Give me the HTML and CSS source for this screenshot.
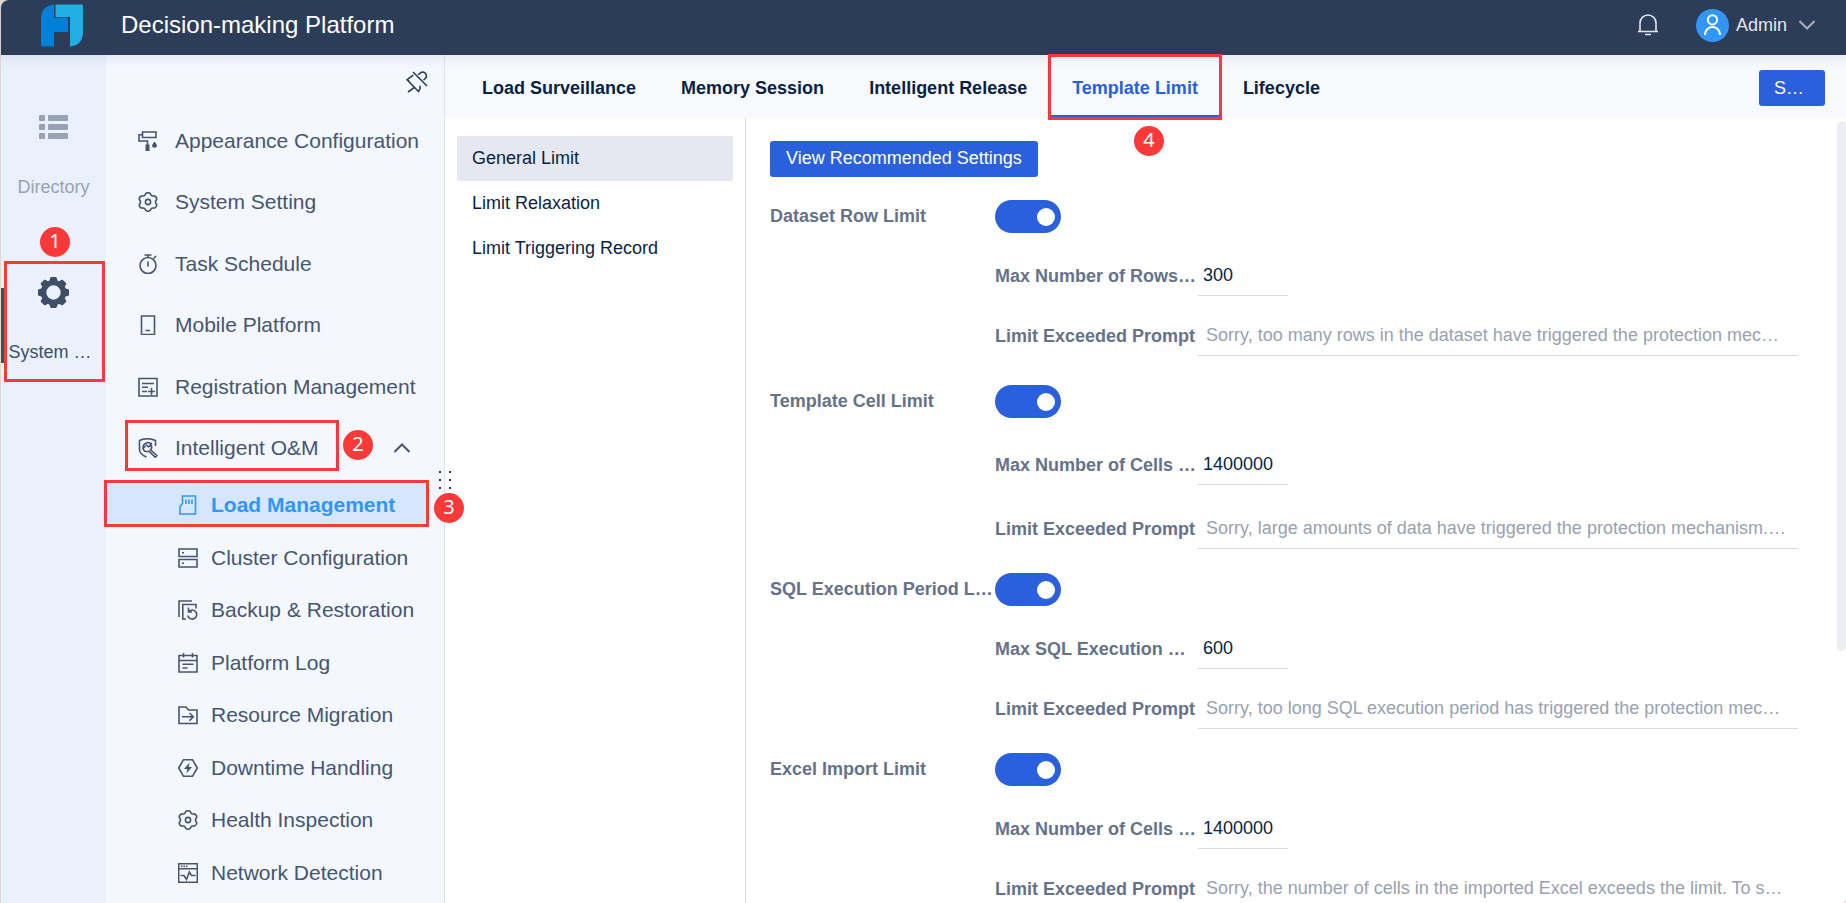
FILE: index.html
```html
<!DOCTYPE html>
<html lang="en">
<head>
<meta charset="utf-8">
<title>Decision-making Platform</title>
<link rel="stylesheet" href="styles.css">
</head>
<body>
<svg class="sprite" aria-hidden="true">
  <symbol id="gear-outline" viewBox="0 0 20 20">
    <path d="M7.800 1.600Q10-.2 12.200 1.600L13.200 3.300Q13.800 4.100 14.800 4L16.400 3.900Q18.900 4.800 18.700 7.400L17.700 9Q17.200 10 17.700 11L18.700 12.600Q18.900 15.200 16.400 16.100L14.800 16Q13.800 15.900 13.200 16.700L12.200 18.400Q10 20.200 7.800 18.400L6.800 16.700Q6.200 15.900 5.200 16L3.600 16.100Q1.100 15.200 1.300 12.600L2.300 11Q2.800 10 2.300 9L1.300 7.400Q1.100 4.800 3.600 3.900L5.200 4Q6.200 4.100 6.800 3.300Z"/>
    <circle cx="10" cy="10" r="2.600"/>
  </symbol>
</svg>
<div class="app">
  <header class="topbar">
    <svg class="logo" viewBox="0 0 42 43" aria-hidden="true">
      <path fill="#0080d8" d="M0 41V13Q1 2 13 .5V14H27V28H13V42.500H1.500Q0 42.500 0 41Z"/>
      <path fill="#22ade5" d="M14.500.5H40.500Q42 .5 42 2V29Q41 41.500 29 42.500V13H14.500Z"/>
    </svg>
    <h1 class="brand">Decision-making Platform</h1>
    <button class="icon-button bell" aria-label="Notifications">
      <svg class="icon" viewBox="0 0 20 22"><path d="M2 17.300V9a8 8 0 0 1 16 0V17.300M0 17.500H20M7 20.500H13"/></svg>
    </button>
    <button class="account">
      <svg class="avatar" viewBox="0 0 33 33"><circle cx="16.500" cy="16.500" r="16.500" fill="#3296f9"/><g fill="none" stroke="#fff" stroke-width="2"><circle cx="16.500" cy="10.800" r="4.600"/><path d="M9 26v-.5a7.500 7.500 0 0 1 15 0V26"/></g></svg>
      <span class="account-name">Admin</span>
      <svg class="chevron" viewBox="0 0 16 10"><path d="M.5 1 8 8.500 15.500 1"/></svg>
    </button>
  </header>

  <div class="body">
    <nav class="rail" aria-label="Primary">
      <a class="rail-item" href="#">
        <span class="rail-icon">
          <svg class="rail-list" viewBox="0 0 29 24"><rect width="6" height="6" rx="1"/><rect x="9" width="20" height="6" rx="1"/><rect y="9" width="6" height="6" rx="1"/><rect x="9" y="9" width="20" height="6" rx="1"/><rect y="18" width="6" height="6" rx="1"/><rect x="9" y="18" width="20" height="6" rx="1"/></svg>
        </span>
        <span class="rail-label">Directory</span>
      </a>
      <a class="rail-item rail-item-active" href="#">
        <span class="rail-icon">
          <svg class="rail-gear" viewBox="0 0 31 31"><circle cx="15.500" cy="15.500" r="9.900" fill="none" stroke="currentColor" stroke-width="5.400"/><g id="teeth"><path id="tooth" d="M11 5 12.300.8Q12.500 0 13.300 0H17.700Q18.500 0 18.700.8L20 5Z"/><use href="#tooth" transform="rotate(45 15.500 15.500)"/><use href="#tooth" transform="rotate(90 15.500 15.500)"/><use href="#tooth" transform="rotate(135 15.500 15.500)"/></g><use href="#teeth" transform="rotate(180 15.500 15.500)"/></svg>
        </span>
        <span class="rail-label">System …</span>
      </a>
    </nav>

    <aside class="side">
      <div class="side-head">
        <button class="icon-button pin" aria-label="Unpin menu">
          <svg class="icon" viewBox="0 0 22 22"><path d="M7 1 21 15M7.300 4.200 1 8.700 8.500 16.500 2 21M3.300 10.600 1 8.400M8.500 16.500 12.500 20.500 14 17.500V14.800M12 3.600 16 1Q20.500 1 20.500 6L17.500 9.200"/></svg>
        </button>
      </div>
      <ul class="menu">
        <li><a class="menu-item" href="#"><svg class="icon" viewBox="0 0 20 20"><path d="M4.500 1H18V6.500H4.500ZM4.500 3.700H1V10H9.500V14"/><path class="solid" d="M7.500 13.500h4V20h-4ZM16.500 10.500q2.700 3 2.500 4.300a2.500 2 0 0 1-5 0q0-1.300 2.500-4.300Z"/></svg>Appearance Configuration</a></li>
        <li><a class="menu-item" href="#"><svg class="icon"><use href="#gear-outline"/></svg>System Setting</a></li>
        <li><a class="menu-item" href="#"><svg class="icon" viewBox="0 0 20 20"><circle cx="10" cy="11.500" r="8"/><path d="M6.500 1H13.500M10 1V3.500M10 7.500V12.500M15.500 4.500 18 2"/></svg>Task Schedule</a></li>
        <li><a class="menu-item" href="#"><svg class="icon" viewBox="0 0 20 20"><path d="M3.500 1H16.500V19.500H3.500ZM7.500 15.500H12"/></svg>Mobile Platform</a></li>
        <li><a class="menu-item" href="#"><svg class="icon" viewBox="0 0 20 20"><path d="M1 1.500H19V19H1ZM4 6.500H16M4 10.300H10M4 14.500H9M10 14.500H17M13.500 11V18"/></svg>Registration Management</a></li>
        <li><a class="menu-item" href="#" aria-expanded="true"><svg class="icon" viewBox="0 0 20 20"><path d="M17.500 8V2.500Q9-1 1.500 2.500V12Q2 16.500 8.500 19M8 6.500 10.200 8.800 12.200 8 12.300 6Q15 9 12.500 11.800L18.800 17.500 17.300 19.300 11 13.200Q6 14.500 5 10.500 4.500 6 9.500 4.500Q12.500 4.500 14 6M7.500 8 5.500 10"/></svg><span class="menu-text">Intelligent O&amp;M</span><svg class="chevron" viewBox="0 0 16 10"><path d="M.5 9 8 1.500 15.500 9"/></svg></a></li>
      </ul>
      <ul class="submenu">
        <li><a class="sub-item sub-item-active" href="#"><svg class="icon" viewBox="0 0 20 20"><path d="M4.500 1H17.500V19H2V11.500L4.500 8.500ZM8 4.500V9M11 4.500V9M14 4.500V9"/></svg>Load Management</a></li>
        <li><a class="sub-item" href="#"><svg class="icon" viewBox="0 0 20 20"><path d="M1 1H19V8.500H1ZM1 11.500H19V19H1ZM4 4.800H6M4 15.200H6"/></svg>Cluster Configuration</a></li>
        <li><a class="sub-item" href="#"><svg class="icon" viewBox="0 0 20 20"><path d="M1 17V1H14M8 19H4.800V4.500H18V8.500M10.500 7.500V12H14M10.500 12A4.500 4.500 0 1 1 9.800 15.500"/></svg>Backup &amp; Restoration</a></li>
        <li><a class="sub-item" href="#"><svg class="icon" viewBox="0 0 20 20"><path d="M1 2.500H19V19H1ZM1 7.500H19M5.500 0V4.500M14.500 0V4.500M4.500 11.300H15.500M4.500 15H9.500"/></svg>Platform Log</a></li>
        <li><a class="sub-item" href="#"><svg class="icon" viewBox="0 0 20 20"><path d="M1 2H8L10.500 5H19V18.500H1ZM4 11.800H15M11.500 8 15.300 11.800 11.500 15.600"/></svg>Resource Migration</a></li>
        <li><a class="sub-item" href="#"><svg class="icon" viewBox="0 0 20 20"><path d="M5.500 1.700H14.500L19.300 10 14.500 18.300H5.500L.7 10Z"/><path class="solid" d="M11.500 4.500 6 11H9.300L8.500 15.500 14 9H10.700Z"/></svg>Downtime Handling</a></li>
        <li><a class="sub-item" href="#"><svg class="icon"><use href="#gear-outline"/></svg>Health Inspection</a></li>
        <li><a class="sub-item" href="#"><svg class="icon" viewBox="0 0 20 20"><path d="M.7.700H19.300V19.300H.7ZM.7 5.800H19.300M3 3.300H4.500M5.500 3.300H7M8 3.300H9.500M2.500 12.500H6L8.500 16.500 11.300 9 13.500 12.500H17.500"/></svg>Network Detection</a></li>
      </ul>
      <svg class="resizer" viewBox="0 0 14 20" aria-hidden="true"><path d="M1 1h2v2h-2ZM11 1h2v2h-2ZM1 9h2v2h-2ZM11 9h2v2h-2ZM1 17h2v2h-2ZM11 17h2v2h-2Z"/></svg>
    </aside>

    <main class="main">
      <div class="tabbar">
        <nav class="tabs" aria-label="Load management">
          <a class="tab" href="#">Load Surveillance</a>
          <a class="tab" href="#">Memory Session</a>
          <a class="tab" href="#">Intelligent Release</a>
          <a class="tab tab-active" href="#">Template Limit</a>
          <a class="tab" href="#">Lifecycle</a>
        </nav>
        <button class="button button-save">S…</button>
      </div>
      <div class="content">
        <nav class="limits" aria-label="Limits">
          <a class="limit limit-active" href="#">General Limit</a>
          <a class="limit" href="#">Limit Relaxation</a>
          <a class="limit" href="#">Limit Triggering Record</a>
        </nav>
        <form class="settings">
          <button class="button" type="button">View Recommended Settings</button>

          <section class="group">
            <div class="switch-row"><label class="label" for="s1">Dataset Row Limit</label><input class="switch" type="checkbox" role="switch" id="s1" checked></div>
            <div class="field"><label class="label" for="n1">Max Number of Rows…</label><input class="input number" id="n1" value="300"></div>
            <div class="field"><label class="label" for="p1">Limit Exceeded Prompt</label><input class="input prompt" id="p1" placeholder="Sorry, too many rows in the dataset have triggered the protection mec…"></div>
          </section>
          <section class="group group-loose">
            <div class="switch-row"><label class="label" for="s2">Template Cell Limit</label><input class="switch" type="checkbox" role="switch" id="s2" checked></div>
            <div class="field"><label class="label" for="n2">Max Number of Cells …</label><input class="input number" id="n2" value="1400000"></div>
            <div class="field"><label class="label" for="p2">Limit Exceeded Prompt</label><input class="input prompt" id="p2" placeholder="Sorry, large amounts of data have triggered the protection mechanism.…"></div>
          </section>
          <section class="group">
            <div class="switch-row"><label class="label" for="s3">SQL Execution Period L…</label><input class="switch" type="checkbox" role="switch" id="s3" checked></div>
            <div class="field"><label class="label" for="n3">Max SQL Execution …</label><input class="input number" id="n3" value="600"></div>
            <div class="field"><label class="label" for="p3">Limit Exceeded Prompt</label><input class="input prompt" id="p3" placeholder="Sorry, too long SQL execution period has triggered the protection mec…"></div>
          </section>
          <section class="group">
            <div class="switch-row"><label class="label" for="s4">Excel Import Limit</label><input class="switch" type="checkbox" role="switch" id="s4" checked></div>
            <div class="field"><label class="label" for="n4">Max Number of Cells …</label><input class="input number" id="n4" value="1400000"></div>
            <div class="field"><label class="label" for="p4">Limit Exceeded Prompt</label><input class="input prompt" id="p4" placeholder="Sorry, the number of cells in the imported Excel exceeds the limit. To s…"></div>
          </section>
        </form>
        <div class="scroll-thumb"></div>
      </div>
    </main>
  </div>

  <!-- Step markers laid over the interface -->
  <div class="frame frame-1"></div><span class="step step-1">1</span>
  <div class="frame frame-2"></div><span class="step step-2">2</span>
  <div class="frame frame-3"></div><span class="step step-3">3</span>
  <div class="frame frame-4"></div><span class="step step-4">4</span>
</div>
</body>
</html>
```
FILE: styles.css
```css
* { box-sizing: border-box; }

body {
  margin: 0;
  background: #e3d6d6;
  color: #0a1f44;
  font: 18px/24px "Liberation Sans", Arial, sans-serif;
}

a { color: inherit; text-decoration: none; }
ul { margin: 0; padding: 0; list-style: none; }
button { font: inherit; border: 0; padding: 0; background: none; color: inherit; cursor: pointer; }
svg { display: block; flex: none; }

.sprite { position: absolute; width: 0; height: 0; }

.app {
  position: relative;
  display: flex;
  flex-direction: column;
  height: 100vh;
  padding-left: 1px;
  overflow: hidden;
}

.icon {
  width: 20px;
  height: 20px;
  fill: none;
  stroke: currentColor;
  stroke-width: 1.6;
}
.icon .solid { fill: currentColor; stroke: none; }
.chevron { width: 16px; height: 10px; fill: none; stroke: currentColor; stroke-width: 2; }

/* Top bar */
.topbar {
  position: relative;
  z-index: 1;
  display: flex;
  align-items: center;
  height: 55px;
  padding: 0 31px 5px 40px;
  border-top-left-radius: 8px;
  background: #2c3d59;
  color: #e3e6ea;
  box-shadow: 0 4px 12px rgba(20, 30, 60, 0.08);
}
.logo { width: 42px; height: 43px; }
.brand {
  flex: 1;
  margin: 0 0 0 38px;
  color: #fff;
  font-size: 24px;
  font-weight: 400;
  line-height: 28px;
}
.bell { margin-right: 38px; }
.bell .icon { height: 22px; }
.account { display: flex; align-items: center; }
.avatar { width: 33px; height: 33px; margin-right: 7px; }
.account .chevron { margin-left: 12px; color: #a7aeba; }

.body { flex: 1; display: flex; min-height: 0; }

/* Icon rail */
.rail {
  flex: none;
  width: 105px;
  padding-top: 20px;
  background: #eaf1fd;
  color: #98a2b5;
}
.rail-item {
  position: relative;
  display: flex;
  flex-direction: column;
  align-items: center;
  height: 165px;
  padding-top: 34px;
}
.rail-item-active { color: #3f4e68; }
.rail-item-active::before {
  content: "";
  position: absolute;
  left: 0;
  top: 48px;
  width: 3px;
  height: 75px;
  background: #3f4e68;
}
.rail-icon { display: flex; align-items: center; height: 36px; margin-bottom: 30px; fill: currentColor; }
.rail-list { width: 29px; height: 24px; }
.rail-gear { width: 31px; height: 31px; }
.rail-item-active .rail-label { width: 90px; }

/* Side menu */
.side {
  position: relative;
  flex: none;
  width: 339px;
  border-right: 1px solid #dde2ee;
  background: #f4f7fe;
  color: #46566f;
  font-size: 21px;
}
.side-head { display: flex; justify-content: flex-end; height: 55px; padding: 16px 16px 0 0; }
.pin { height: 22px; color: #2c3d59; }
.pin .icon { width: 22px; height: 22px; }
.menu, .submenu { display: grid; grid-auto-rows: 1fr; align-items: center; }
.menu { height: 369px; }
.submenu { height: 420px; }
.menu-item { display: flex; align-items: center; gap: 17px; padding-left: 32px; white-space: nowrap; }
.menu-item .chevron { margin-right: 34px; }
.menu-text { flex: 1; }
.sub-item {
  display: flex;
  align-items: center;
  gap: 13px;
  height: 42px;
  margin-right: 18px;
  padding-left: 72px;
  white-space: nowrap;
}
.sub-item-active { background: #d6e6fc; color: #3296f9; font-weight: 700; }
.resizer {
  position: absolute;
  z-index: 1;
  top: 415px;
  right: -8px;
  width: 14px;
  height: 20px;
  fill: #2c3d59;
}

/* Main panel */
.main { flex: 1; display: flex; flex-direction: column; min-width: 0; background: #fff; border-bottom-right-radius: 4px; }
.tabbar {
  display: flex;
  align-items: center;
  justify-content: space-between;
  flex: none;
  height: 63px;
  padding: 2px 21px 0 15px;
  background: #f7f9fd;
}
.tabs { display: flex; gap: 1px; height: 61px; }
.tab { display: flex; align-items: center; padding: 3px 22px 0; border-bottom: 3px solid transparent; font-weight: 700; }
.tab-active { border-color: #2b60dc; color: #2b60dc; }

.button {
  height: 36px;
  padding: 0 16px 2px;
  border-radius: 3px;
  background: #2b60dc;
  color: #fff;
  text-align: left;
}
.button-save { width: 66px; padding: 0 15px; }

.content { position: relative; flex: 1; display: flex; min-height: 0; overflow: hidden; }
.limits { flex: none; width: 301px; padding: 18px 12px 0; border-right: 1px solid #d8dbe2; }
.limit { display: block; padding: 0 15px; line-height: 45px; }
.limit-active { background: #e5e8f0; }

.settings { flex: 1; min-width: 0; padding: 23px 48px 0 24px; }
.group {
  display: flex;
  flex-direction: column;
  gap: 24px;
  margin-bottom: 24px;
}
.button + .group { margin-top: 23px; }
.group-loose { gap: 28px; margin-top: 29px; }
.label { flex: none; color: #66728a; font-weight: 700; white-space: nowrap; overflow: hidden; }
.switch-row { display: flex; align-items: flex-start; height: 36px; }
.switch-row .label { width: 225px; line-height: 32px; }
.switch {
  appearance: none;
  display: flex;
  align-items: center;
  justify-content: flex-end;
  width: 66px;
  height: 33px;
  margin: 0;
  padding-right: 6px;
  border-radius: 17px;
  background: #2b60dc;
}
.switch::before { content: ""; width: 18px; height: 18px; border-radius: 50%; background: #fff; }
.field { display: flex; height: 36px; padding-left: 225px; }
.field .label { width: 203px; line-height: 32px; }
.input {
  min-width: 0;
  border: 0;
  border-bottom: 1px solid #d8dae3;
  padding: 0 5px;
  padding-bottom: 5px;
  background: none;
  color: #0a1f44;
  font: inherit;
  outline: 0;
}
.number { width: 90px; }
.prompt { flex: 1; padding-left: 8px; }
.prompt::placeholder { color: #98a2b0; opacity: 1; }

.scroll-thumb {
  position: absolute;
  top: 3px;
  right: 0;
  width: 9px;
  height: 530px;
  border-radius: 5px;
  background: #edeef3;
}

/* Step markers */
.frame { position: absolute; z-index: 2; border: 3px solid #fc3939; pointer-events: none; }
.frame-1 { left: 4px; top: 261px; width: 101px; height: 121px; }
.frame-2 { left: 125px; top: 420px; width: 214px; height: 51px; }
.frame-3 { left: 104px; top: 480px; width: 325px; height: 47px; }
.frame-4 { left: 1048px; top: 54px; width: 174px; height: 66px; }
.step {
  position: absolute;
  z-index: 2;
  width: 30px;
  height: 30px;
  border-radius: 50%;
  background: #fc3939;
  color: #fff;
  font: 20px/28px "Noto Sans", sans-serif;
  text-align: center;
}
.step-1 { left: 40px; top: 227px; }
.step-2 { left: 343px; top: 430px; }
.step-3 { left: 434px; top: 493px; }
.step-4 { left: 1134px; top: 126px; }
```
